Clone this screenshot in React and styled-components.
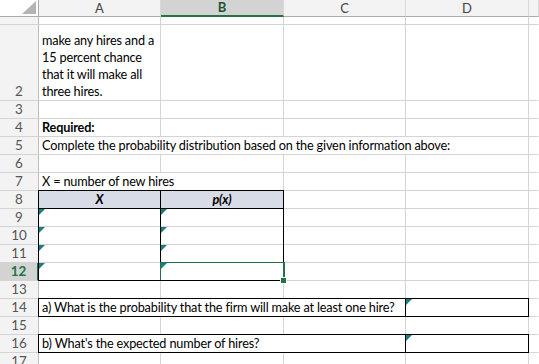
import styled, { createGlobalStyle } from "styled-components";

const GlobalStyle = createGlobalStyle`
    html, body {
        margin: 0;
        padding: 0;
        background: #fff;
    }

    body {
        font-family: Lato, "Liberation Sans", sans-serif;
        overflow: hidden;
    }
`;

const GREEN = "#217346";
const GRID = "#d4d4d4";
const MARK = "#1a7f84";

const Sheet = styled.div`
    display: grid;
    grid-template-columns: 39px 122px 123px 122px 123px 1fr;
    grid-template-rows: 17px 8px 76px repeat(15, 18px);
    width: 539px;
    height: 364px;
    overflow: hidden;
    font-size: 12.7px;
    letter-spacing: -0.17px;
    color: #000;
`;

const Corner = styled.div`
    position: relative;
    background: #fff;
    border-right: 1px solid #ababab;
    border-bottom: 1px solid #ababab;

    svg {
        position: absolute;
        right: 2px;
        bottom: 2px;
    }
`;

const ColHead = styled.div`
    display: flex;
    align-items: center;
    justify-content: center;
    overflow: hidden;
    background: ${(p) => (p.$active ? "#d3d3d3" : "#f3f3f3")};
    border-right: 1px solid #d8d8d8;
    border-bottom: ${(p) => (p.$active ? `2px solid ${GREEN}` : "1px solid #ababab")};
    color: ${(p) => (p.$active ? "#1e5435" : "#444")};
    font-weight: ${(p) => (p.$active ? 700 : 400)};
    font-size: 13px;
    line-height: 15px;
    letter-spacing: 0;
`;

const RowHead = styled.div`
    display: flex;
    align-items: ${(p) => (p.$clip ? "flex-start" : "flex-end")};
    justify-content: center;
    overflow: hidden;
    background: ${(p) => (p.$active ? "#d3d3d3" : "#f3f3f3")};
    border-right: ${(p) => (p.$active ? `2px solid ${GREEN}` : "1px solid #bdbdbd")};
    border-bottom: 1px solid ${GRID};
    color: ${(p) => (p.$active ? GREEN : "#555")};
    font-weight: ${(p) => (p.$active ? 700 : 400)};
    font-size: 13.4px;
    line-height: 17px;
    letter-spacing: 0;

    span {
        margin-top: ${(p) => (p.$clip ? "-13px" : "0")};
    }
`;

const Cell = styled.div`
    position: relative;
    grid-column: span ${(p) => p.$span || 1};
    display: flex;
    align-items: flex-end;
    justify-content: ${(p) => (p.$center ? "center" : "flex-start")};
    padding: 0 3px;
    background: ${(p) => p.$fill || "#fff"};
    border-right: 1px solid ${(p) => (p.$last ? "transparent" : GRID)};
    border-bottom: 1px solid ${GRID};
    font-weight: ${(p) => (p.$bold ? 700 : 400)};
    font-style: ${(p) => (p.$italic ? "italic" : "normal")};
    line-height: 17px;
    white-space: nowrap;

    &::after {
        content: "";
        position: absolute;
        inset: -1px;
        pointer-events: none;
        border-style: solid;
        border-color: #000;
        border-width: ${(p) =>
            p.$box
                ? ["t", "r", "b", "l"]
                      .map((s) => (p.$box.includes(s) ? "1px" : "0"))
                      .join(" ")
                : "0"};
    }

    &::before {
        content: "";
        display: ${(p) => (p.$mark ? "block" : "none")};
        position: absolute;
        top: 0;
        left: 0;
        border-top: 6px solid ${MARK};
        border-right: 6px solid transparent;
        z-index: 2;
    }
`;

const Wrapped = styled.div`
    line-height: 17px;

    div {
        height: 17px;
    }
`;

const Selection = styled.div`
    position: absolute;
    top: -1px;
    left: -1px;
    right: -2px;
    bottom: 0;
    border-top: 1px solid ${GREEN};
    border-left: 1px solid ${GREEN};
    border-right: 2px solid ${GREEN};
    z-index: 3;
`;

const FillHandle = styled.div`
    position: absolute;
    right: -4px;
    bottom: -4px;
    width: 5px;
    height: 5px;
    background: ${GREEN};
    border: 1px solid #fff;
`;

const CornerMark = () => (
    <svg width="14" height="13" viewBox="0 0 14 13">
        <polygon points="14,0 14,13 0,13" fill="#b4b4b4" />
    </svg>
);

const rows = [
    { n: 1, clip: true, cells: [{}, {}, {}, {}, {}] },
    {
        n: 2,
        cells: [
            {
                text: [
                    "make any hires and a",
                    "15 percent chance",
                    "that it will make all",
                    "three hires.",
                ],
            },
            {},
            {},
            {},
            {},
        ],
    },
    { n: 3, cells: [{}, {}, {}, {}, {}] },
    { n: 4, cells: [{ text: "Required:", bold: true }, {}, {}, {}, {}] },
    {
        n: 5,
        cells: [
            {
                span: 4,
                text: "Complete the probability distribution based on the given information above:",
            },
            {},
        ],
    },
    { n: 6, cells: [{}, {}, {}, {}, {}] },
    { n: 7, cells: [{ span: 2, text: "X = number of new hires" }, {}, {}, {}] },
    {
        n: 8,
        cells: [
            { text: "X", bold: true, italic: true, center: true, fill: "#d8dce6", box: "trbl" },
            { text: "p(x)", bold: true, italic: true, center: true, fill: "#d8dce6", box: "trb" },
            {},
            {},
            {},
        ],
    },
    { n: 9, cells: [{ mark: true, box: "lr" }, { mark: true, box: "r" }, {}, {}, {}] },
    { n: 10, cells: [{ mark: true, box: "lr" }, { mark: true, box: "r" }, {}, {}, {}] },
    { n: 11, cells: [{ mark: true, box: "lr" }, { mark: true, box: "r" }, {}, {}, {}] },
    {
        n: 12,
        active: true,
        cells: [{ mark: true, box: "lrb" }, { mark: true, box: "rb", selected: true }, {}, {}, {}],
    },
    { n: 13, cells: [{}, {}, {}, {}, {}] },
    {
        n: 14,
        cells: [
            {
                span: 3,
                box: "trbl",
                text: "a) What is the probability that the firm will make at least one hire?",
            },
            { mark: true, box: "trb" },
            {},
        ],
    },
    { n: 15, cells: [{}, {}, {}, {}, {}] },
    {
        n: 16,
        cells: [
            { span: 3, box: "trbl", text: "b) What's the expected number of hires?" },
            { mark: true, box: "trb" },
            {},
        ],
    },
    { n: 17, cells: [{}, {}, {}, {}, {}] },
];

const App = () => {
    return (
        <>
            <GlobalStyle />
            <Sheet>
                <Corner>
                    <CornerMark />
                </Corner>
                <ColHead>A</ColHead>
                <ColHead $active>B</ColHead>
                <ColHead>C</ColHead>
                <ColHead>D</ColHead>
                <ColHead />

                {rows.map((row) => [
                    <RowHead key={`h${row.n}`} $active={row.active} $clip={row.clip}>
                        <span>{row.n}</span>
                    </RowHead>,
                    ...row.cells.map((c, i) => (
                        <Cell
                            key={`${row.n}-${i}`}
                            $span={c.span}
                            $bold={c.bold}
                            $italic={c.italic}
                            $center={c.center}
                            $fill={c.fill}
                            $box={c.box}
                            $mark={c.mark}
                            $last={i === row.cells.length - 1}
                        >
                            {Array.isArray(c.text) ? (
                                <Wrapped>
                                    {c.text.map((line) => (
                                        <div key={line}>{line}</div>
                                    ))}
                                </Wrapped>
                            ) : (
                                c.text
                            )}
                            {c.selected && (
                                <Selection>
                                    <FillHandle />
                                </Selection>
                            )}
                        </Cell>
                    )),
                ])}
            </Sheet>
        </>
    );
};

export default App;
